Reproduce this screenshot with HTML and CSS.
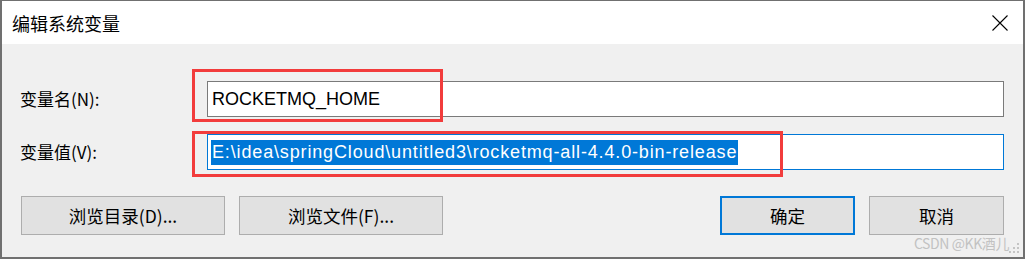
FILE: index.html
```html
<!DOCTYPE html>
<html lang="zh-CN">
<head>
  <meta charset="UTF-8" />
  <title>编辑系统变量</title>
  <link rel="stylesheet" href="styles.css">
</head>
<body>
  <div class="window">
    <div class="titlebar">
      <span class="title">编辑系统变量</span>
      <svg class="close" width="16" height="16" viewBox="0 0 16 16">
        <path d="M0.5 0.5 L15.5 15.5 M15.5 0.5 L0.5 15.5" stroke="#000" stroke-width="1.1" fill="none"/>
      </svg>
    </div>

    <div class="content">
      <div class="fields">
        <label class="field-label">变量名(N):</label>
        <div class="field-input">ROCKETMQ_HOME</div>
        <label class="field-label">变量值(V):</label>
        <div class="field-input focused"><span class="selected">E:\idea\springCloud\untitled3\rocketmq-all-4.4.0-bin-release</span></div>
      </div>

      <div class="buttons">
        <div class="btn-group">
          <button class="btn wide">浏览目录(D)...</button>
          <button class="btn wide">浏览文件(F)...</button>
        </div>
        <div class="btn-group">
          <button class="btn default">确定</button>
          <button class="btn">取消</button>
        </div>
      </div>
    </div>

    <!-- annotations drawn over the dialog -->
    <div class="mark mark-name"></div>
    <div class="mark mark-value"></div>
    <div class="watermark">CSDN @KK酒儿</div>
    <svg class="grip" width="12" height="12" viewBox="0 0 12 12">
      <rect x="8" y="0" width="2" height="2" fill="#c4c4c4"/>
      <rect x="4" y="4" width="2" height="2" fill="#c4c4c4"/>
      <rect x="8" y="4" width="2" height="2" fill="#c4c4c4"/>
      <rect x="0" y="8" width="2" height="2" fill="#c4c4c4"/>
      <rect x="4" y="8" width="2" height="2" fill="#c4c4c4"/>
      <rect x="8" y="8" width="2" height="2" fill="#c4c4c4"/>
    </svg>
  </div>
</body>
</html>
```

FILE: styles.css
```css
body {
  margin: 0;
  background: #f0f0f0;
  font-family: "Noto Sans CJK SC", sans-serif;
}

.window {
  position: relative;
  width: 1021px;
  height: 256px;
  border: 2px solid #707070;
  border-top-width: 1px;
  background: #f0f0f0;
}

.titlebar {
  height: 43px;
  background: #fff;
  display: flex;
  align-items: center;
  justify-content: space-between;
  padding: 0 15px 0 10px;
}

.title {
  font-size: 18px;
  line-height: 20px;
  color: #000;
}

.close {
  margin-top: 1px;
}

.content {
  padding: 37px 19px 0 18px;
}

.fields {
  display: grid;
  grid-template-columns: 187px 1fr;
  row-gap: 17px;
  align-items: center;
}

.field-label {
  font-size: 17px;
  line-height: 20px;
  color: #000;
}

.field-input {
  height: 34px;
  border: 1px solid #7a7a7a;
  background: #fff;
  padding-left: 4px;
  display: flex;
  align-items: center;
  font-family: "Liberation Sans", sans-serif;
  font-size: 18px;
  color: #000;
}

.field-input.focused {
  border-color: #0078d7;
  padding-left: 3px;
}

.selected {
  background: #0078d7;
  color: #fff;
  line-height: 25px;
  padding: 0 1px;
  letter-spacing: 0.85px;
}

.buttons {
  margin-top: 26px;
  display: flex;
  justify-content: space-between;
  padding-left: 1px;
}

.btn-group {
  display: flex;
  gap: 14px;
}

.btn {
  height: 39px;
  width: 135px;
  background: #e1e1e1;
  border: 1px solid #adadad;
  font-family: "Noto Sans CJK SC", sans-serif;
  font-size: 17.5px;
  color: #000;
  padding: 0;
}

.btn.wide {
  width: 204px;
}

.btn.default {
  border: 2px solid #0078d7;
}

.mark {
  position: absolute;
  border: 3px solid #f23c3c;
}

.mark-name {
  left: 190px;
  top: 68px;
  width: 245px;
  height: 47px;
}

.mark-value {
  left: 190px;
  top: 130px;
  width: 585px;
  height: 40px;
}

.watermark {
  position: absolute;
  right: 14px;
  bottom: 6px;
  font-size: 14px;
  line-height: 16px;
  letter-spacing: -0.4px;
  color: #c2c2c2;
}

.grip {
  position: absolute;
  right: 2px;
  bottom: 2px;
}
```
